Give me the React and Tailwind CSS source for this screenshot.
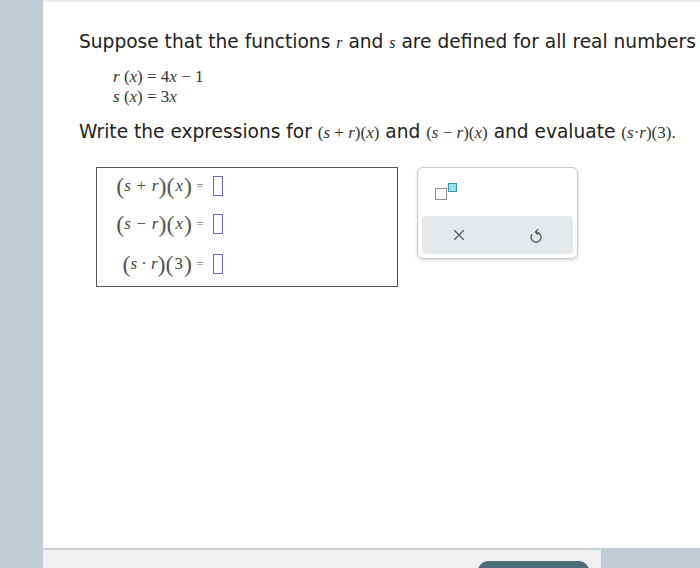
import React from 'react'

const serif = { fontFamily: '"Liberation Serif", "Times New Roman", serif' }

function V({ children }) {
  return <i className="text-[16px]" style={serif}>{children}</i>
}

function M({ children }) {
  return (
    <span className="text-[17px] text-[#333]" style={serif}>
      {children}
    </span>
  )
}

function Big({ children }) {
  return <span className="text-[24px] font-light leading-none text-[#555]" style={serif}>{children}</span>
}

function Op({ children }) {
  return <span className="mx-[6px] text-[16px]">{children}</span>
}

function Answer() {
  return <span className="ml-[5px] inline-block h-[20px] w-[10px] border border-[#6f62c9]" />
}

function Row({ label }) {
  return (
    <div className="contents">
      <div className="flex items-center justify-end text-[17px] text-[#444]" style={serif}>{label}</div>
      <div className="flex items-center justify-center text-[13px] text-[#777]" style={serif}>=</div>
      <div className="flex items-center"><Answer /></div>
    </div>
  )
}

export default function App() {
  return (
    <div
      className="flex h-[568px] w-[700px] overflow-hidden bg-white text-[#222]"
      style={{ fontFamily: '"DejaVu Sans", Verdana, sans-serif' }}
    >
      <div className="w-[43px] shrink-0 bg-[#c1cdd3]" />
      <div className="flex min-w-0 flex-1 flex-col">
        <div className="flex-1 overflow-hidden border-t-2 border-[#eceeef] pl-[36px] pt-[28px]">
          <p className="whitespace-nowrap text-[18.6px] leading-[24px]">
            Suppose that the functions <V>r</V> and <V>s</V> are defined for all real numbers
          </p>

          <div className="ml-[34px] mt-[12px] text-[17px] leading-[20px] text-[#333]" style={serif}>
            <div><i>r</i> (<i>x</i>) = 4<i>x</i> − 1</div>
            <div><i>s</i> (<i>x</i>) = 3<i>x</i></div>
          </div>

          <p className="mt-[13px] whitespace-nowrap text-[18.6px] leading-[24px]">
            Write the expressions for <M>(<i>s</i> + <i>r</i>)(<i>x</i>)</M> and <M>(<i>s</i> − <i>r</i>)(<i>x</i>)</M> and evaluate <M>(<i>s</i>·<i>r</i>)(3).</M>
          </p>

          <div className="mt-[22px] flex items-start">
            <div className="ml-[17px] grid h-[120px] w-[302px] grid-cols-[95px_16px_1fr] grid-rows-[36px_40px_40px] border border-[#555]">
              <Row label={<><Big>(</Big><i>s</i><Op>+</Op><i>r</i><Big>)</Big><Big>(</Big><i className="px-[1px]">x</i><Big>)</Big></>} />
              <Row label={<><Big>(</Big><i>s</i><Op>−</Op><i>r</i><Big>)</Big><Big>(</Big><i className="px-[1px]">x</i><Big>)</Big></>} />
              <Row label={<><Big>(</Big><i>s</i><span className="mx-[4px]">·</span><i>r</i><Big>)</Big><Big>(</Big><span className="px-[1px]">3</span><Big>)</Big></>} />
            </div>

            <div className="ml-[19px] flex h-[92px] w-[161px] flex-col rounded-[6px] border border-[#c3c9ce] bg-white p-[4px] shadow-[0_2px_4px_rgba(0,0,0,0.12)]">
              <div className="flex h-[44px] items-start pl-[13px] pt-[10px]">
                <div className="relative h-[22px] w-[26px]">
                  <span className="absolute left-0 top-[6px] h-[12px] w-[12px] border-[1.5px] border-[#8a8f94]" />
                  <span className="absolute left-[13px] top-[1px] h-[9px] w-[9px] border-[1.5px] border-[#3496a6] bg-[#8fe3f0]" />
                </div>
              </div>
              <div className="flex h-[38px] items-center justify-around rounded-[4px] bg-[#e6e9ec] text-[#555e66]">
                <svg width="12" height="12" viewBox="0 0 12 12" className="ml-[2px]">
                  <path d="M1.5 1.5l9 9M10.5 1.5l-9 9" stroke="currentColor" strokeWidth="1.4" strokeLinecap="round" />
                </svg>
                <svg width="14" height="15" viewBox="0 0 14 15" className="ml-[6px]" fill="none">
                  <path d="M6 4.2a5 5 0 1 1-4.3 2.6" stroke="currentColor" strokeWidth="1.4" strokeLinecap="round" />
                  <path d="M7.6 1.6L5.4 4.2l2.4 2.1" stroke="currentColor" strokeWidth="1.4" strokeLinecap="round" strokeLinejoin="round" />
                </svg>
              </div>
            </div>
          </div>
        </div>

        <div className="flex h-[20px] shrink-0">
          <div className="flex w-[558px] border-t-2 border-[#cad2d7] bg-[#eef0f2] pl-[435px] pt-[11px]">
            <div className="h-[10px] w-[111px] rounded-t-[10px] bg-[#4b6e7a]" />
          </div>
          <div className="flex-1 bg-[#c1cdd3]" />
        </div>
      </div>
    </div>
  )
}
